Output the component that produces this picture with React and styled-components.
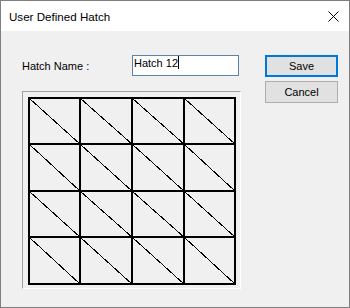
import React from "react";
import styled, { createGlobalStyle } from "styled-components";

const Global = createGlobalStyle`
  html, body { margin: 0; padding: 0; background: #f0f0f0; }
  body { font-family: "Liberation Sans", Arial, sans-serif; }
`;

const Window = styled.div`
  width: 350px;
  height: 308px;
  box-sizing: border-box;
  border: 1px solid #7f7f7f;
  background: #f0f0f0;
  display: flex;
  flex-direction: column;
`;

const TitleBar = styled.div`
  height: 30px;
  background: #ffffff;
  display: flex;
  align-items: center;
  justify-content: space-between;
  padding: 0 10px 0 8px;
  flex-shrink: 0;
`;

const Title = styled.span`
  font-family: "Liberation Sans", Arial, sans-serif;
  font-size: 11.6px;
  color: #000;
  padding-top: 1px;
`;

const CloseIcon = styled.svg`
  display: block;
`;

const Body = styled.div`
  display: flex;
  padding: 24px 0 0 21px;
  gap: 24px;
`;

const LeftCol = styled.div`
  display: flex;
  flex-direction: column;
  width: 219px;
`;

const FormRow = styled.div`
  display: flex;
  align-items: center;
  height: 21px;
`;

const Label = styled.span`
  width: 110px;
  font-size: 11px;
  color: #000;
  padding-top: 1px;
`;

const TextBox = styled.div`
  width: 107px;
  height: 21px;
  box-sizing: border-box;
  border: 1px solid #5b84ab;
  background: #ffffff;
  padding: 1px 1px 0 1px;
  font-size: 11px;
  line-height: 13px;
  color: #000;
  display: flex;
  align-items: flex-start;
`;

const Caret = styled.span`
  display: inline-block;
  width: 1px;
  height: 13px;
  background: #000;
  margin-top: -1px;
`;

const Preview = styled.div`
  margin-top: 15px;
  width: 219px;
  height: 198px;
  box-sizing: border-box;
  border-top: 1px solid #a0a0a0;
  border-left: 1px solid #a0a0a0;
  border-right: 1px solid #ffffff;
  border-bottom: 1px solid #ffffff;
  padding: 5px 0 0 5px;
`;

const HatchSvg = styled.svg`
  display: block;
`;

const RightCol = styled.div`
  display: flex;
  flex-direction: column;
  gap: 4px;
`;

const Button = styled.button`
  width: 73px;
  height: 22px;
  box-sizing: border-box;
  margin: 0;
  padding: 0 0 1px 0;
  background: #e1e1e1;
  border: ${(p) => (p.$default ? "2px solid #0078d7" : "1px solid #adadad")};
  font-family: "Liberation Sans", Arial, sans-serif;
  font-size: 11px;
  color: #000;
  outline: none;
`;

function Hatch() {
  const W = 208;
  const H = 188;
  const xs = [1, 52, 104, 156, 207];
  const ys = [1, 47, 94, 140, 187];
  const diags = [];
  for (let r = 0; r < 4; r++) {
    for (let c = 0; c < 4; c++) {
      diags.push(
        <line
          key={`${r}-${c}`}
          x1={xs[c] + 0.5}
          y1={ys[r] + 0.5}
          x2={xs[c + 1] + 0.5}
          y2={ys[r + 1] + 0.5}
          stroke="#000"
          strokeWidth="1"
          shapeRendering="crispEdges"
        />
      );
    }
  }
  return (
    <HatchSvg width={W} height={H} viewBox={`0 0 ${W} ${H}`}>
      {diags}
      {xs.map((x, i) => (
        <line key={`v${i}`} x1={x} y1={0} x2={x} y2={H} stroke="#000" strokeWidth="2" shapeRendering="crispEdges" />
      ))}
      {ys.map((y, i) => (
        <line key={`h${i}`} x1={0} y1={y} x2={W} y2={y} stroke="#000" strokeWidth="2" shapeRendering="crispEdges" />
      ))}
    </HatchSvg>
  );
}

export default function App() {
  return (
    <>
      <Global />
      <Window>
        <TitleBar>
          <Title>User Defined Hatch</Title>
          <CloseIcon width="11" height="11" viewBox="0 0 11 11">
            <path d="M0.5 0.5 L10.5 10.5 M10.5 0.5 L0.5 10.5" stroke="#000" strokeWidth="1" fill="none" />
          </CloseIcon>
        </TitleBar>
        <Body>
          <LeftCol>
            <FormRow>
              <Label>Hatch Name :</Label>
              <TextBox>
                Hatch 12<Caret />
              </TextBox>
            </FormRow>
            <Preview>
              <Hatch />
            </Preview>
          </LeftCol>
          <RightCol>
            <Button $default>Save</Button>
            <Button>Cancel</Button>
          </RightCol>
        </Body>
      </Window>
    </>
  );
}
